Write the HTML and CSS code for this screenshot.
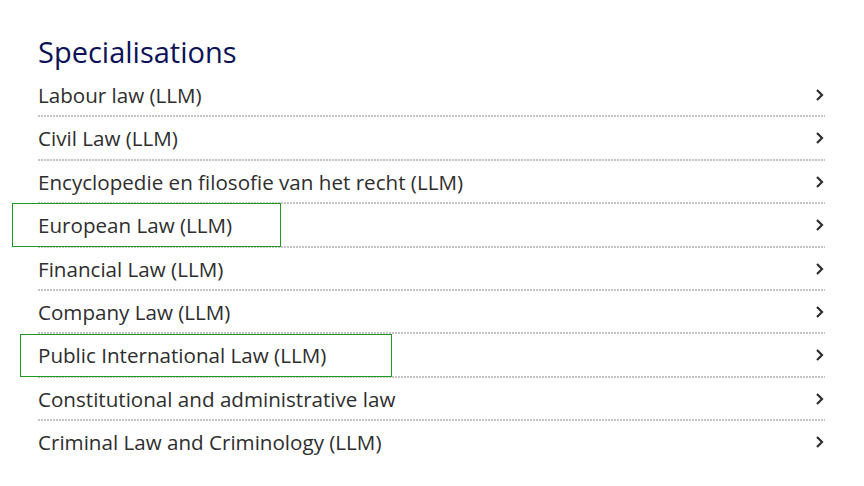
FILE: index.html
```html
<!DOCTYPE html>
<html lang="en">
<head>
<meta charset="utf-8">
<title>Specialisations</title>
<link rel="stylesheet" href="styles.css">
</head>
<body>
<section class="panel">
  <h2 class="title">Specialisations</h2>
  <ul class="list">
    <li class="item"><a href="#">Labour law (LLM)</a><svg class="chev" viewBox="0 0 10 14"><path d="M2 2l5 5-5 5"/></svg></li>
    <li class="item"><a href="#">Civil Law (LLM)</a><svg class="chev" viewBox="0 0 10 14"><path d="M2 2l5 5-5 5"/></svg></li>
    <li class="item"><a href="#">Encyclopedie en filosofie van het recht (LLM)</a><svg class="chev" viewBox="0 0 10 14"><path d="M2 2l5 5-5 5"/></svg></li>
    <li class="item"><a href="#">European Law (LLM)</a><svg class="chev" viewBox="0 0 10 14"><path d="M2 2l5 5-5 5"/></svg><span class="mark mark-eu"></span></li>
    <li class="item"><a href="#">Financial Law (LLM)</a><svg class="chev" viewBox="0 0 10 14"><path d="M2 2l5 5-5 5"/></svg></li>
    <li class="item"><a href="#">Company Law (LLM)</a><svg class="chev" viewBox="0 0 10 14"><path d="M2 2l5 5-5 5"/></svg></li>
    <li class="item"><a href="#">Public International Law (LLM)</a><svg class="chev" viewBox="0 0 10 14"><path d="M2 2l5 5-5 5"/></svg><span class="mark mark-pil"></span></li>
    <li class="item"><a href="#">Constitutional and administrative law</a><svg class="chev" viewBox="0 0 10 14"><path d="M2 2l5 5-5 5"/></svg></li>
    <li class="item"><a href="#">Criminal Law and Criminology (LLM)</a><svg class="chev" viewBox="0 0 10 14"><path d="M2 2l5 5-5 5"/></svg></li>
  </ul>
</section>
</body>
</html>
```
FILE: styles.css
```css
html, body {
  margin: 0;
  padding: 0;
  background: #ffffff;
}
body {
  font-family: "Open Sans", "Noto Sans", sans-serif;
}
.panel {
  width: 787px;
  padding: 32px 0 0 38px;
}
.title {
  margin: 0 0 2px 0;
  font-size: 29px;
  font-weight: 500;
  line-height: 40px;
  color: #0b1257;
}
.list {
  list-style: none;
  margin: 0;
  padding: 0;
}
.item {
  position: relative;
  display: flex;
  align-items: center;
  justify-content: space-between;
  height: 42px;
  background-image: linear-gradient(to right, #c4c4c4 2px, transparent 2px);
  background-size: 3px 2px;
  background-repeat: repeat-x;
  background-position: left bottom;
  padding-bottom: 1.4px;
}
.item:last-child {
  background-image: none;
}
.item a {
  color: #2e2e2e;
  text-decoration: none;
  font-size: 20.6px;
  line-height: 26px;
}
.chev {
  width: 10px;
  height: 14px;
  fill: none;
  stroke: #2e2e2e;
  stroke-width: 2.2;
}
.mark {
  position: absolute;
  border: 1px solid #1f9a1f;
  pointer-events: none;
}
.mark-eu {
  left: -26px;
  top: -1px;
  width: 267px;
  height: 42px;
}
.mark-pil {
  left: -18px;
  top: 0;
  width: 370px;
  height: 41px;
}
```
